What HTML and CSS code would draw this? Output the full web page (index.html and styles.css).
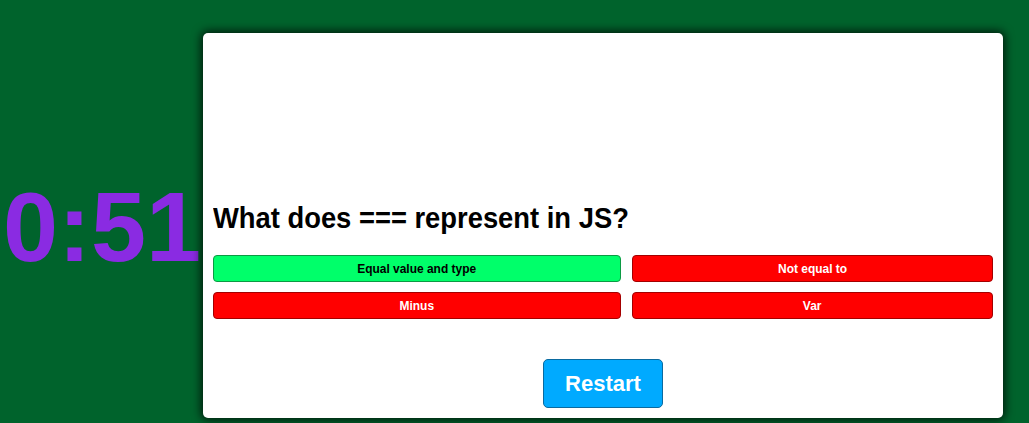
FILE: index.html
```html
<!DOCTYPE html>
<html>
<head>
<meta charset="utf-8">
<link rel="stylesheet" href="styles.css">
</head>
<body>
<div class="page">
  <div class="timer">0:51</div>
  <div class="card">
    <h2 class="question"><span class="narrow">What does === represent in JS?</span></h2>
    <div class="answers">
      <button class="answer correct"><span class="label">Equal value and type</span></button>
      <button class="answer wrong"><span class="label">Not equal to</span></button>
      <button class="answer wrong"><span class="label">Minus</span></button>
      <button class="answer wrong"><span class="label">Var</span></button>
    </div>
    <div class="controls">
      <button class="restart">Restart</button>
    </div>
  </div>
</div>
</body>
</html>
```
FILE: styles.css
```css
html, body {
  margin: 0;
  padding: 0;
  background: #00632c;
  height: 100%;
  overflow: hidden;
}
.page {
  position: relative;
  width: 1029px;
  height: 423px;
}
.timer {
  position: absolute;
  left: 3px;
  top: 171px;
  font-family: "Liberation Sans", Arial, sans-serif;
  font-weight: bold;
  font-size: 99px;
  line-height: 112px;
  color: #8a2be2;
}
.card {
  position: absolute;
  left: 203px;
  top: 33px;
  width: 800px;
  height: 385px;
  box-sizing: border-box;
  background: #fff;
  border-radius: 5px;
  box-shadow: 0 0 10px 2px rgba(0, 0, 0, 0.75);
  display: flex;
  flex-direction: column;
  justify-content: flex-end;
  padding: 0 10px 10px;
}
.question {
  margin: 0 0 20px 0;
  font-family: "Liberation Sans", Arial, sans-serif;
  font-weight: bold;
  font-size: 30px;
  line-height: 34px;
  color: #000;
}
.narrow {
  display: inline-block;
  transform: scaleX(0.912);
  transform-origin: left center;
  white-space: nowrap;
}
.answers {
  display: grid;
  grid-template-columns: 408px 361px;
  column-gap: 11px;
  row-gap: 10px;
}
.answer {
  height: 27px;
  border-radius: 4px;
  font-family: "Liberation Sans", Arial, sans-serif;
  font-weight: bold;
  font-size: 13px;
  padding: 0;
  cursor: pointer;
}
.label {
  display: inline-block;
  transform: scaleX(0.92);
  transform-origin: center;
  white-space: nowrap;
}
.correct {
  background: #00ff6a;
  border: 1px solid #0c9a44;
  color: #000;
}
.wrong {
  background: #ff0000;
  border: 1px solid #a30000;
  color: #fff;
}
.controls {
  display: flex;
  justify-content: center;
  margin-top: 40px;
}
.restart {
  width: 120px;
  height: 49px;
  background: #00aaff;
  border: 1px solid #0a6aa0;
  border-radius: 5px;
  color: #fff;
  font-family: "Liberation Sans", Arial, sans-serif;
  font-weight: bold;
  font-size: 22px;
  padding: 0;
}
```
